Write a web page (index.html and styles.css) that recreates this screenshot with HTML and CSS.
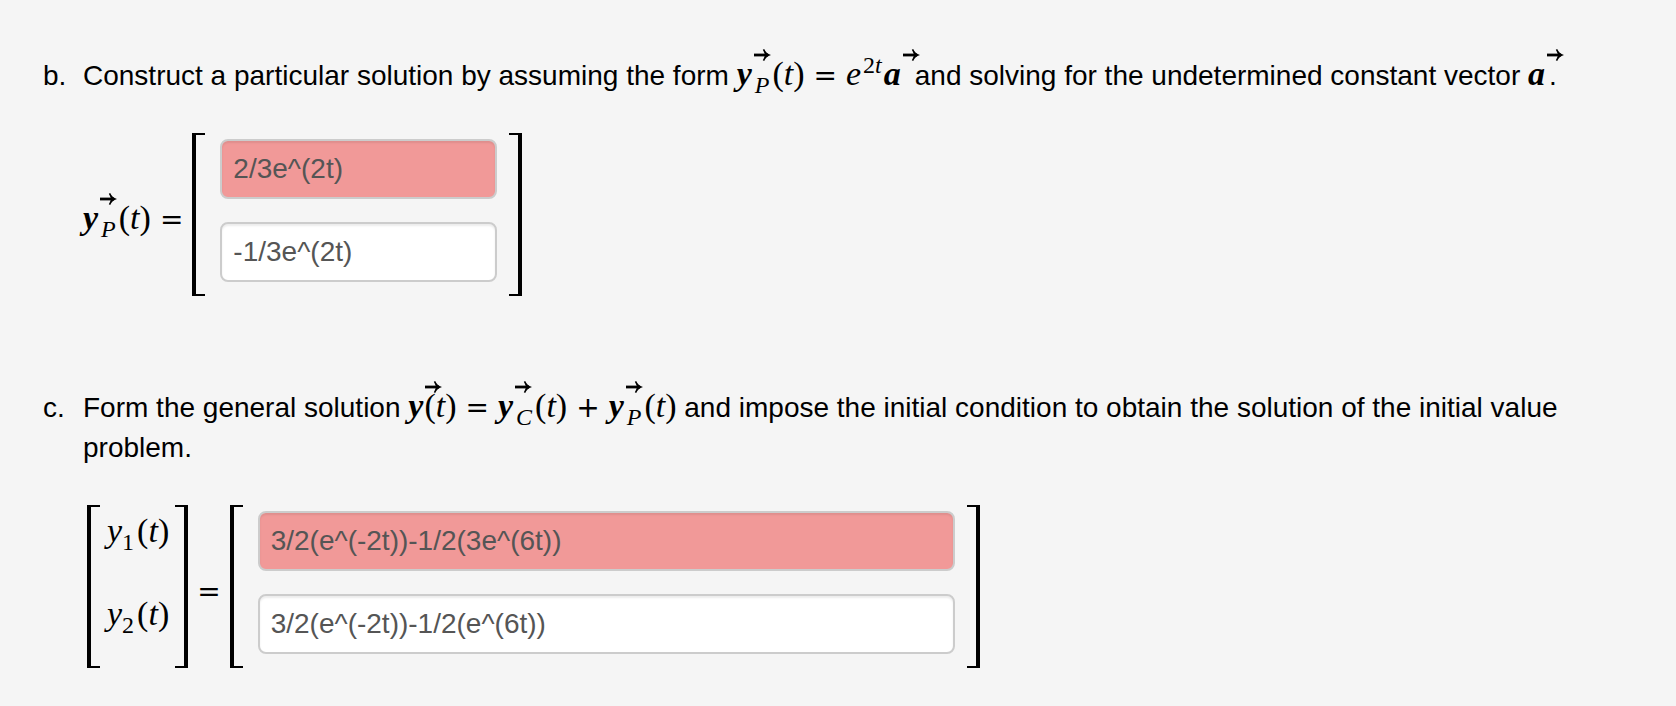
FILE: index.html
```
<!DOCTYPE html>
<html lang="en">
<head>
    <meta charset="UTF-8">
    <meta name="viewport" content="width=device-width, initial-scale=1.0">
    <title>Initial value problem</title>
    <link rel="stylesheet" href="styles.css">
</head>
<body>
    <!-- vector arrow, reused in every formula -->
    <svg class="defs" aria-hidden="true">
        <symbol id="arrow" viewBox="0 0 17 12">
            <path d="M0 6H14" stroke="#000" stroke-width="2.8" fill="none"/>
            <path d="M10.2 0C11.5 3 13.5 5 17 6C13.5 7 11.5 9 10.2 12L8.8 11.2C10 9 10.7 7.4 11 6C10.7 4.6 10 3 8.8 0.8Z"/>
        </symbol>
    </svg>
    <main>
        <section class="part">
            <span class="label">b.</span>
            <div class="content">
                <p>Construct a particular solution by assuming the form <span class="math"><span class="vec">y<svg><use href="#arrow"/></svg></span><sub>P</sub><span class="arg">(<i>t</i>)</span><span class="op">=</span><i>e</i><sup>2<i>t</i></sup><span class="vec wide">a<svg><use href="#arrow"/></svg></span></span>and solving for the undetermined constant vector <span class="math"><span class="vec end">a<svg><use href="#arrow"/></svg></span></span>.</p>
                <div class="equation">
                    <div class="math left"><span class="vec">y<svg><use href="#arrow"/></svg></span><sub>P</sub><span class="arg">(<i>t</i>)</span><span class="op">=</span></div>
                    <div class="matrix">
                        <input type="text" class="wrong" aria-label="Particular solution, first entry" value="2/3e^(2t)">
                        <input type="text" aria-label="Particular solution, second entry" value="-1/3e^(2t)">
                    </div>
                </div>
            </div>
        </section>
        <section class="part">
            <span class="label">c.</span>
            <div class="content">
                <p>Form the general solution <span class="math"><span class="vec">y<svg><use href="#arrow"/></svg></span><span class="arg">(<i>t</i>)</span><span class="op">=</span><span class="vec">y<svg><use href="#arrow"/></svg></span><sub>C</sub><span class="arg">(<i>t</i>)</span><span class="op">+</span><span class="vec">y<svg><use href="#arrow"/></svg></span><sub>P</sub><span class="arg">(<i>t</i>)</span></span> and impose the initial condition to obtain the solution of the initial value problem.</p>
                <div class="equation">
                    <div class="matrix names">
                        <div class="math"><i>y</i><sub class="num">1</sub><span class="arg">(<i>t</i>)</span></div>
                        <div class="math"><i>y</i><sub class="num">2</sub><span class="arg">(<i>t</i>)</span></div>
                    </div>
                    <div class="math left"><span class="op">=</span></div>
                    <div class="matrix long">
                        <input type="text" class="wrong" aria-label="General solution, first entry" value="3/2(e^(-2t))-1/2(3e^(6t))">
                        <input type="text" aria-label="General solution, second entry" value="3/2(e^(-2t))-1/2(e^(6t))">
                    </div>
                </div>
            </div>
        </section>
    </main>
</body>
</html>
```
FILE: styles.css
```
body {
    margin: 0;
    background-color: #f5f5f5;
    color: #000;
    font-family: "Liberation Sans", Arial, sans-serif;
    font-size: 28px;
    line-height: 40px;
}
main {
    padding: 56px 83px 38px 43px;
}
.defs {
    display: none;
}
.part {
    display: flex;
}
.part + .part {
    margin-top: 92px;
}
.label {
    flex: 0 0 40px;
}
.content {
    flex: 1;
}
p {
    margin: 0;
}

/* formulas */
.math {
    font-family: "Liberation Serif", "Times New Roman", serif;
    font-size: 34px;
    line-height: 0;
    white-space: nowrap;
}
.vec {
    position: relative;
    font-style: italic;
    font-weight: bold;
}
.vec svg {
    position: absolute;
    left: 100%;
    bottom: 31px;
    width: 17px;
    height: 12px;
    margin-left: 2px;
}
.vec.wide {
    margin-right: 14px;
}
.vec.end {
    margin-right: 4px;
}
sub, sup {
    font-size: 24px;
    line-height: 0;
    vertical-align: baseline;
    position: relative;
}
sub {
    top: 8px;
    margin: 0 2px 0 3px;
    font-style: italic;
}
sub.num {
    margin: 0 2px 0 0;
    font-style: normal;
}
sup {
    top: -12px;
    margin: 0 2px;
}
.arg {
    margin-left: 1px;
}
.op {
    margin: 0 9px;
    font-family: "DejaVu Sans", sans-serif;
    font-size: 28px;
}

/* answer matrices */
.equation {
    display: flex;
    align-items: center;
    margin-top: 37px;
}
.equation .left {
    padding-top: 8px;
    line-height: 40px;
}
.matrix {
    box-sizing: border-box;
    display: flex;
    flex-direction: column;
    gap: 23px;
    position: relative;
    padding: 6px 21px 14px 24px;
    border-left: 4px solid #000;
    border-right: 4px solid #000;
}
.matrix::before,
.matrix::after {
    content: "";
    position: absolute;
    top: 0;
    bottom: 0;
    width: 9px;
    border-top: 2px solid #000;
    border-bottom: 2px solid #000;
}
.matrix::before {
    left: 0;
}
.matrix::after {
    right: 0;
}
.matrix.names {
    margin-left: 4px;
    padding: 6px 15px 14px 16px;
}
.names .math {
    height: 60px;
    line-height: 40px;
}
input {
    box-sizing: border-box;
    width: 277px;
    height: 60px;
    padding: 8px 11px;
    border: 2px solid #ccc;
    border-radius: 8px;
    background-color: #fff;
    box-shadow: inset 0 2px 2px rgba(0, 0, 0, 0.075);
    color: #555;
    font-family: inherit;
    font-size: 28px;
}
.long input {
    width: 697px;
}
input.wrong {
    background-color: #f19998;
}
```
